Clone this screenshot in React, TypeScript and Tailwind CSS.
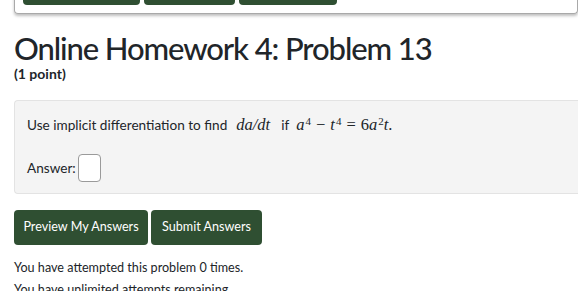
const serif = { fontFamily: '"Liberation Serif", "DejaVu Serif", serif' };

function Sup({ children }: { children: React.ReactNode }) {
  return <sup className="ml-[1px] text-[11px] not-italic">{children}</sup>;
}

export default function App() {
  return (
    <div
      className="h-[291px] w-[578px] overflow-hidden bg-white pl-[14px] text-[#212529]"
      style={{ fontFamily: 'Lato, "Open Sans", sans-serif' }}
    >
      {/* top nav box, mostly scrolled off */}
      <div className="-mt-[30px] rounded-b-[4px] border border-t-0 border-[#a9a9a9] px-[8px] pb-[8px] shadow-[0_2px_3px_rgba(0,0,0,0.25)]">
        <div className="flex gap-[4px]">
          <div className="h-[35px] w-[117px] rounded-[4px] bg-[#2f4f32]" />
          <div className="h-[35px] w-[91px] rounded-[4px] bg-[#2f4f32]" />
          <div className="h-[35px] w-[98px] rounded-[4px] bg-[#2f4f32]" />
        </div>
      </div>

      <h1 className="mt-[17px] text-[31px] font-medium leading-[34px] tracking-[-1.1px]">
        Online Homework 4: Problem 13
      </h1>
      <div className="text-[14px] font-bold leading-[18px]">(1 point)</div>

      <div className="mt-[17px] h-[94px] rounded-l-[4px] border border-r-0 border-[#e3e3e3] bg-[#f4f4f4] pl-[12px] pt-[12px] text-[13.6px]">
        <div className="flex items-baseline">
          <span>Use implicit differentiation to find</span>
          <span className="ml-[9px] text-[16.5px] italic" style={serif}>
            da/dt
          </span>
          <span className="ml-[11px]">if</span>
          <span className="ml-[7px] flex items-baseline text-[16.5px]" style={serif}>
            <i>a</i>
            <Sup>4</Sup>
            <span className="mx-[5px]">−</span>
            <i>t</i>
            <Sup>4</Sup>
            <span className="mx-[5px]">=</span>
            <span>6</span>
            <i>a</i>
            <Sup>2</Sup>
            <i>t</i>
            <span>.</span>
          </span>
        </div>
        <div className="mt-[16px] flex items-center">
          <span>Answer:</span>
          <div className="ml-[2px] h-[28px] w-[23px] rounded-[4px] border border-[#9a9a9a] bg-white" />
        </div>
      </div>

      <div className="mt-[16px] flex gap-[3px] text-[12.6px] text-white">
        <div className="flex h-[35px] w-[134px] items-center justify-center rounded-[4px] bg-[#2f4f32]">
          Preview My Answers
        </div>
        <div className="flex h-[35px] w-[111px] items-center justify-center rounded-[4px] bg-[#2f4f32]">
          Submit Answers
        </div>
      </div>

      <div className="mt-[12px] text-[12.6px] leading-[22px]">
        <div>You have attempted this problem 0 times.</div>
        <div>You have unlimited attempts remaining.</div>
      </div>
    </div>
  );
}
